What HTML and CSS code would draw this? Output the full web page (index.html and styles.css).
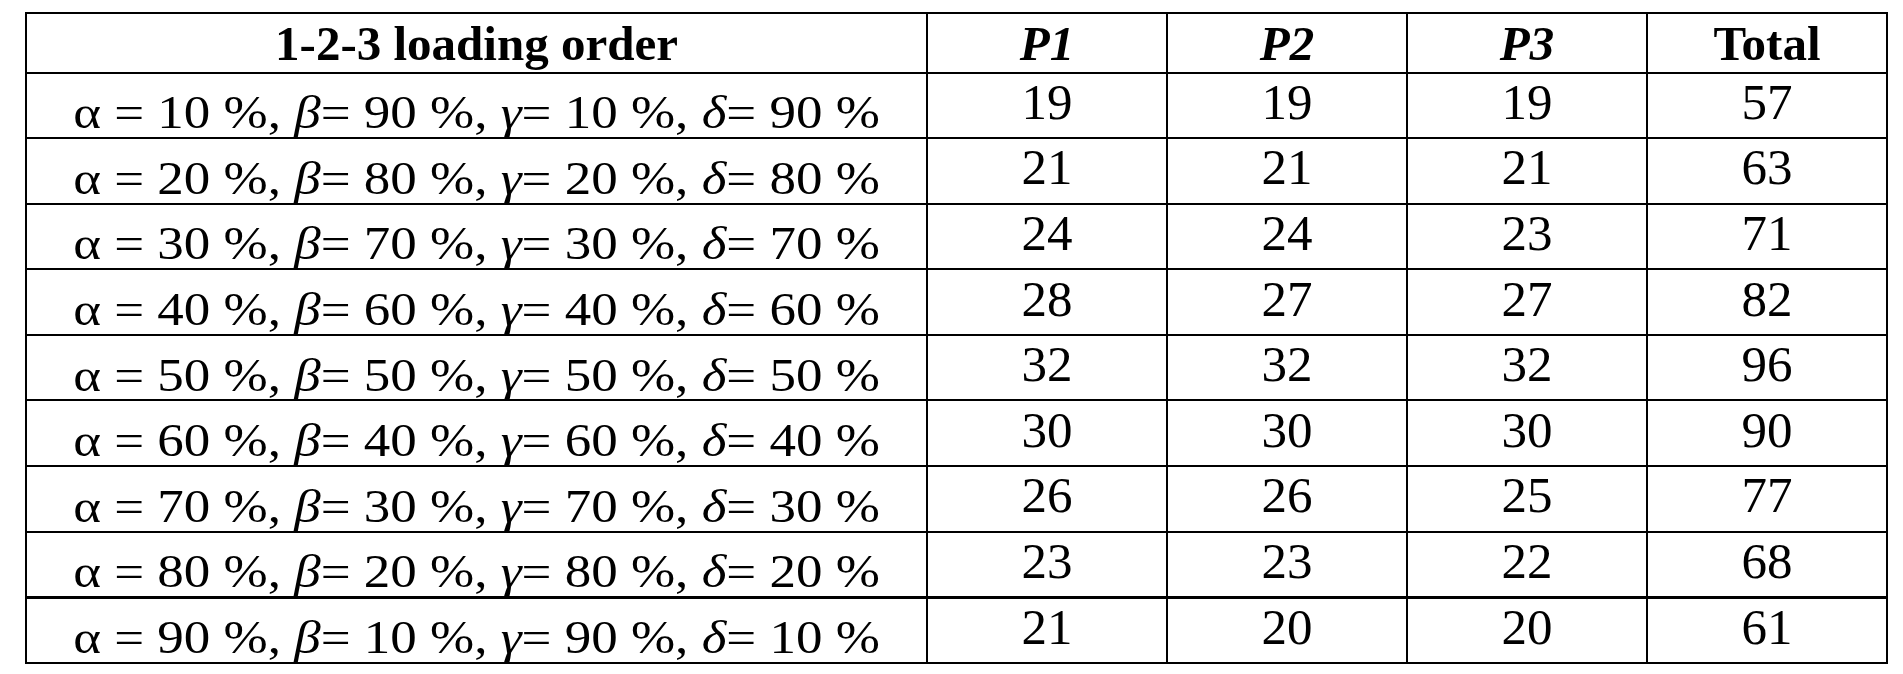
FILE: index.html
```html
<!DOCTYPE html>
<html>
<head>
<meta charset="utf-8">
<link rel="stylesheet" href="styles.css">
</head>
<body>
<table class="grid">
  <colgroup>
    <col class="c-main">
    <col class="c-num">
    <col class="c-num">
    <col class="c-num">
    <col class="c-num">
  </colgroup>
  <thead>
    <tr class="head">
      <th>1-2-3 loading order</th>
      <th><i>P1</i></th>
      <th><i>P2</i></th>
      <th><i>P3</i></th>
      <th>Total</th>
    </tr>
  </thead>
  <tbody>
    <tr><td class="f"><span>α = 10 %, <i>β</i>= 90 %, <i>γ</i>= 10 %, <i>δ</i>= 90 %</span></td><td>19</td><td>19</td><td>19</td><td>57</td></tr>
    <tr><td class="f"><span>α = 20 %, <i>β</i>= 80 %, <i>γ</i>= 20 %, <i>δ</i>= 80 %</span></td><td>21</td><td>21</td><td>21</td><td>63</td></tr>
    <tr><td class="f"><span>α = 30 %, <i>β</i>= 70 %, <i>γ</i>= 30 %, <i>δ</i>= 70 %</span></td><td>24</td><td>24</td><td>23</td><td>71</td></tr>
    <tr><td class="f"><span>α = 40 %, <i>β</i>= 60 %, <i>γ</i>= 40 %, <i>δ</i>= 60 %</span></td><td>28</td><td>27</td><td>27</td><td>82</td></tr>
    <tr><td class="f"><span>α = 50 %, <i>β</i>= 50 %, <i>γ</i>= 50 %, <i>δ</i>= 50 %</span></td><td>32</td><td>32</td><td>32</td><td>96</td></tr>
    <tr><td class="f"><span>α = 60 %, <i>β</i>= 40 %, <i>γ</i>= 60 %, <i>δ</i>= 40 %</span></td><td>30</td><td>30</td><td>30</td><td>90</td></tr>
    <tr><td class="f"><span>α = 70 %, <i>β</i>= 30 %, <i>γ</i>= 70 %, <i>δ</i>= 30 %</span></td><td>26</td><td>26</td><td>25</td><td>77</td></tr>
    <tr class="before-last"><td class="f"><span>α = 80 %, <i>β</i>= 20 %, <i>γ</i>= 80 %, <i>δ</i>= 20 %</span></td><td>23</td><td>23</td><td>22</td><td>68</td></tr>
    <tr><td class="f"><span>α = 90 %, <i>β</i>= 10 %, <i>γ</i>= 90 %, <i>δ</i>= 10 %</span></td><td>21</td><td>20</td><td>20</td><td>61</td></tr>
  </tbody>
</table>
</body>
</html>
```

FILE: styles.css
```css
html, body {
  margin: 0;
  background: #ffffff;
}

body {
  padding: 12px 0 0 25px;
  font-family: "Liberation Serif", "Times New Roman", serif;
  color: #000000;
}

.grid {
  border-collapse: collapse;
  table-layout: fixed;
  width: 1861px;
  line-height: 1;
}

.c-main { width: 901px; }
.c-num { width: 240px; }

.grid tr.head { height: 59.5px; }
.grid tbody tr { height: 65.6px; }

.grid th,
.grid td {
  border: 2px solid #000000;
  padding: 0;
  text-align: center;
  vertical-align: middle;
  white-space: nowrap;
}

.grid th {
  font-size: 49px;
  font-weight: bold;
  line-height: 50px;
  padding-top: 3px;
}

.grid td {
  font-size: 51px;
  font-weight: normal;
  line-height: 52px;
  padding-bottom: 7px;
}

.grid td.f {
  font-size: 53px;
  line-height: 50px;
  padding-bottom: 0;
}

.grid td.f span {
  display: inline-block;
  transform: translateY(7px) scaleY(0.88);
}

.grid tr.before-last td {
  border-bottom-width: 3px;
}
```
